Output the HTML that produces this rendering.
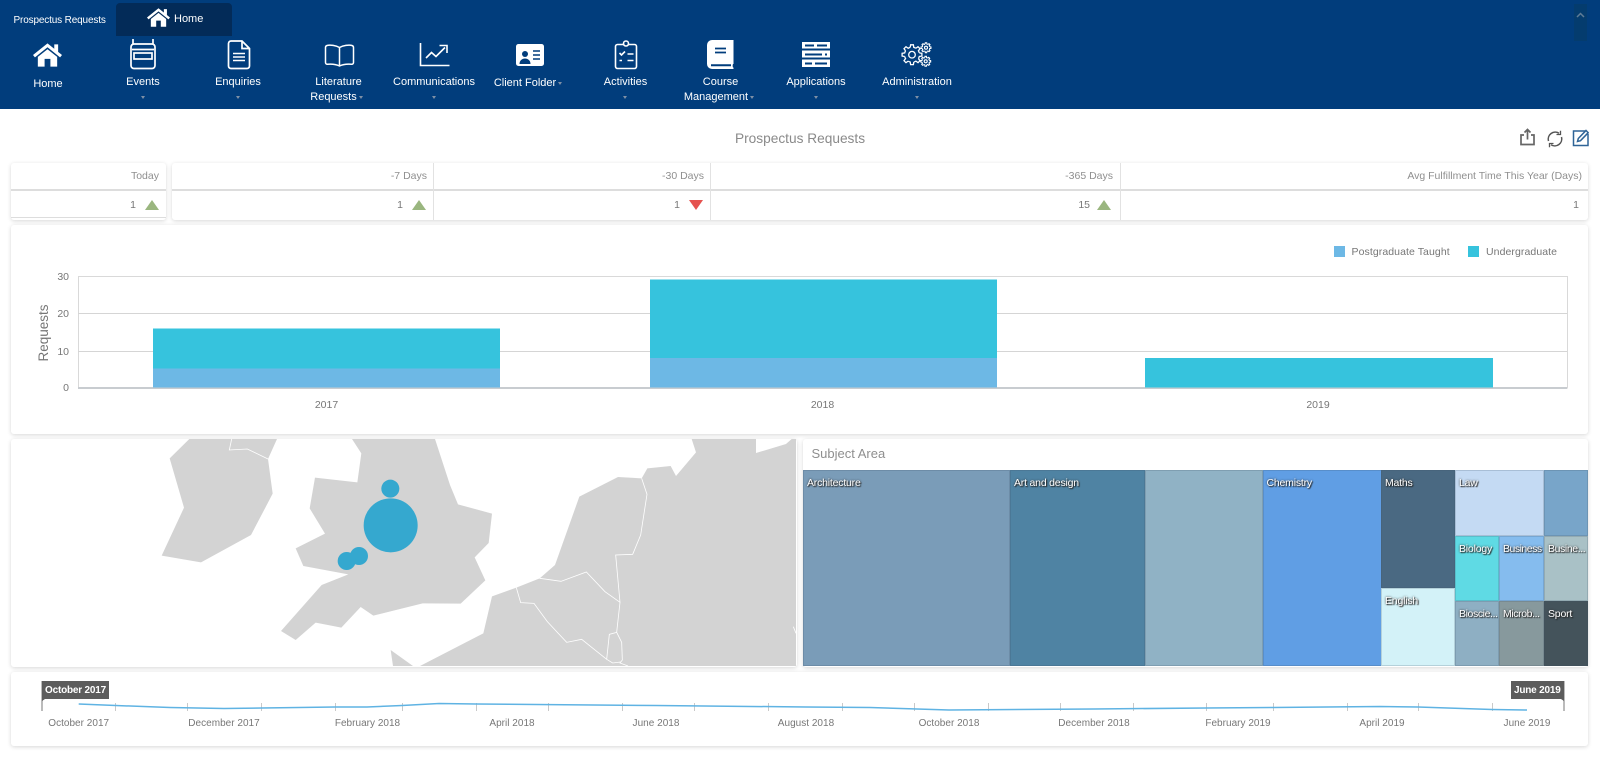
<!DOCTYPE html>
<html lang="en">
<head>
<meta charset="utf-8">
<title>Prospectus Requests</title>
<style>
html,body{margin:0;padding:0;width:1600px;height:757px;overflow:hidden;background:#fff;font-family:"Liberation Sans",sans-serif}
*{box-sizing:border-box}
.a{position:absolute}
.t{position:absolute;white-space:nowrap;line-height:14px}
.c{transform:translateX(-50%)}
.card{position:absolute;background:#fff;border-radius:3px;box-shadow:0 1px 4px rgba(0,0,0,.16)}
.nav{color:#fff;font-size:11px;text-align:center}
.car{position:absolute;width:0;height:0;border-left:2.5px solid transparent;border-right:2.5px solid transparent;border-top:3px solid #7f90a6}
.k{font-size:10.5px;color:#8f8f8f;right:0}
.v{font-size:10.5px;color:#777}
.tri{position:absolute;width:0;height:0;border-left:7px solid transparent;border-right:7px solid transparent}
.up{border-bottom:10px solid #9ab67f}
.dn{border-top:10px solid #e5524f}
.cell{position:absolute;border:1px solid rgba(60,80,100,.2);color:#fff;font-size:10.5px;letter-spacing:-.2px;line-height:14px;padding:5px 0 0 3px;text-shadow:1px 1px 1px #222,0 0 2px #333;overflow:hidden;white-space:nowrap}
.lab{font-size:10.5px;color:#777}
.tl{font-size:10px;letter-spacing:.02px;color:#777}
</style>
</head>
<body>
<div class="a" style="left:0;top:0;width:1600px;height:109px;background:#013d7c"></div>
<div class="a" style="left:116px;top:3px;width:116px;height:33px;background:#032b58;border-radius:4px 4px 0 0"></div>
<div class="a" style="left:1574px;top:4px;width:13px;height:37px;background:#043c6e"></div>
<svg class="a" style="left:1576px;top:12px" width="9" height="6"><path d="M1 5l3.5-3.5L8 5" fill="none" stroke="#5f7c96" stroke-width="1.5"/></svg>
<div class="t nav" style="left:13.500px;top:14px;font-size:10px;letter-spacing:-.15px">Prospectus Requests</div>
<div class="t nav" style="left:174px;top:12px;font-size:11px">Home</div>

<svg class="a" style="left:147px;top:8px" width="23" height="19" viewBox="0 0 30 24"><path fill="#fff" d="M15 0L30 12l-2 2.5L15 4 2 14.5 0 12zM22 1h4v8l-4-3zM15 6l10 8v10h-7v-8h-6v8H5V14z"/></svg>
<svg class="a" style="left:33px;top:43px" width="29" height="24" viewBox="0 0 30 24"><path fill="#fff" d="M15 0L30 12l-2 2.5L15 4 2 14.5 0 12zM22 1h4v8l-4-3zM15 6l10 8v10h-7v-8h-6v8H5V14z"/></svg>
<svg class="a" style="left:129px;top:39px" width="28" height="31" fill="none" stroke="#fff" stroke-width="1.7"><rect x="2" y="5" width="24" height="24.500" rx="3"/><path d="M3 10.500h22M4 0v5M24 0v5"/><rect x="5" y="14" width="18" height="6"/></svg>
<svg class="a" style="left:227px;top:40px" width="24" height="30" fill="none" stroke="#fff" stroke-width="1.7"><path d="M4 1h11l7.500 7.500V26a2.500 2.500 0 0 1-2.500 2.500H4A2.500 2.500 0 0 1 1.500 26V3.500A2.500 2.500 0 0 1 4 1zM15 1v7.500h7.500"/><path d="M6 13.500h12M6 17h12M6 20.500h12" stroke-width="1.500"/></svg>
<svg class="a" style="left:324px;top:42px" width="31" height="26" fill="none" stroke="#fff" stroke-width="1.5"><path d="M15.500 5.500C12 3.500 6 2.500 3 3.500 2 3.800 1.500 4.500 1.500 5.500v15c0 1 .8 1.800 2 1.700 4-.3 8.500 0 12 1.800 3.500-1.800 8-2.100 12-1.800 1.200.1 2-.7 2-1.700v-15c0-1-.5-1.700-1.500-2-3-1-9 0-12.500 2zM15.500 5.500V24"/></svg>
<svg class="a" style="left:419px;top:42px" width="31" height="26" fill="none" stroke="#fff" stroke-width="1.6"><path d="M1.500 1v22.500h29"/><path d="M7 16l5.500-5.500 4.500 4 9-9"/><path d="M20.500 3.500h7.500V11"/></svg>
<svg class="a" style="left:516px;top:43px" width="29" height="24"><rect x="0" y="1" width="28" height="22" rx="2.500" fill="#fff"/><circle cx="9" cy="11" r="3" fill="#013d7c"/><path d="M3.500 21c0-3.500 2.500-5.500 5.500-5.500s5.500 2 5.500 5.500z" fill="#013d7c"/><path d="M17 8h7M17 12h7M17 16h7" stroke="#013d7c" stroke-width="1.500"/></svg>
<svg class="a" style="left:614px;top:40px" width="24" height="30" fill="none" stroke="#fff" stroke-width="1.600"><rect x="1.500" y="4.500" width="21" height="24" rx="2"/><circle cx="12" cy="3.500" r="2.500" fill="#013d7c"/><path d="M5.500 13l2 2 3.500-3.500M13.500 14h6M5.500 20.500h2.500M13.500 20.500h6"/></svg>
<svg class="a" style="left:707px;top:40px" width="28" height="30"><path fill="#fff" d="M5 0h21.500v24H26c-.5 1-.5 2.500 0 3.500h.5V29H5a5 5 0 0 1-5-5V5a5 5 0 0 1 5-5z"/><path d="M8 8.500h11M8 12.500h11" stroke="#013d7c" stroke-width="1.800"/><path d="M4 25.200h20" stroke="#013d7c" stroke-width="2"/></svg>
<svg class="a" style="left:802px;top:42px" width="29" height="26"><rect x="0" y="0" width="28" height="25" fill="#fff"/><path d="M3 3.500h9M15 3.500h10M3 12.500h17M23 12.500h2M3 21.500h7M13 21.500h12" stroke="#013d7c" stroke-width="2"/><path d="M0 7.500h28M0 16.500h28" stroke="#013d7c" stroke-width="2"/></svg>
<svg class="a" style="left:901px;top:42px" width="33" height="27" fill="none" stroke="#fff">
<defs><path id="tth" d="M-1.810-7.280L-1.390-9.900H1.390L1.810-7.280A7.500 7.500 0 0 1 3.860-6.430"/></defs>
<g transform="translate(11 12.700)" stroke-width="1.300"><use href="#tth"/><use href="#tth" transform="rotate(45)"/><use href="#tth" transform="rotate(90)"/><use href="#tth" transform="rotate(135)"/><use href="#tth" transform="rotate(180)"/><use href="#tth" transform="rotate(225)"/><use href="#tth" transform="rotate(270)"/><use href="#tth" transform="rotate(315)"/><circle r="3.300"/></g>
<g transform="translate(25 5.700) scale(.5)" stroke-width="2.200"><use href="#tth"/><use href="#tth" transform="rotate(45)"/><use href="#tth" transform="rotate(90)"/><use href="#tth" transform="rotate(135)"/><use href="#tth" transform="rotate(180)"/><use href="#tth" transform="rotate(225)"/><use href="#tth" transform="rotate(270)"/><use href="#tth" transform="rotate(315)"/><circle r="3"/></g>
<g transform="translate(24.700 19.300) scale(.5)" stroke-width="2.200"><use href="#tth"/><use href="#tth" transform="rotate(45)"/><use href="#tth" transform="rotate(90)"/><use href="#tth" transform="rotate(135)"/><use href="#tth" transform="rotate(180)"/><use href="#tth" transform="rotate(225)"/><use href="#tth" transform="rotate(270)"/><use href="#tth" transform="rotate(315)"/><circle r="3"/></g>
</svg>

<div class="t nav c" style="left:48px;top:77px">Home</div>
<div class="t nav c" style="left:143px;top:75px">Events</div><div class="car" style="left:140.500px;top:96px"></div>
<div class="t nav c" style="left:238px;top:75px">Enquiries</div><div class="car" style="left:236px;top:96px"></div>
<div class="t nav c" style="left:338.500px;top:75px">Literature</div>
<div class="t nav c" style="left:333.500px;top:90px">Requests</div><div class="car" style="left:358.500px;top:96px"></div>
<div class="t nav c" style="left:434px;top:75px">Communications</div><div class="car" style="left:432px;top:96px"></div>
<div class="t nav c" style="left:525px;top:76px">Client Folder</div><div class="car" style="left:558px;top:82px"></div>
<div class="t nav c" style="left:625.500px;top:75px">Activities</div><div class="car" style="left:623px;top:96px"></div>
<div class="t nav c" style="left:720.500px;top:75px">Course</div>
<div class="t nav c" style="left:716px;top:90px">Management</div><div class="car" style="left:750px;top:96px"></div>
<div class="t nav c" style="left:816px;top:75px">Applications</div><div class="car" style="left:813.500px;top:96px"></div>
<div class="t nav c" style="left:917px;top:75px">Administration</div><div class="car" style="left:914.500px;top:96px"></div>

<div class="t c" style="left:800px;top:132px;font-size:13.700px;color:#8a8a8a">Prospectus Requests</div>
<svg class="a" style="left:1519px;top:128px" width="17" height="18" fill="none" stroke="#666" stroke-width="1.700"><path d="M5 7H2v9.500h13V7h-3"/><path d="M8.500 11.500V2M5.500 4.500l3-3 3 3"/></svg>
<svg class="a" style="left:1546px;top:130px" width="18" height="18" fill="none" stroke="#555" stroke-width="1.500"><path d="M2.500 11A7 7 0 0 1 13 3.200"/><path d="M15.500 7A7 7 0 0 1 5 14.800"/><path d="M10.500 4.500L14.500 4.500 14.500 .7M7.500 13.500H3.500v3.800" stroke-width="1.300"/></svg>
<svg class="a" style="left:1572px;top:129px" width="17" height="18" fill="none" stroke="#2f6497" stroke-width="1.500"><path d="M13 2H1.500v14.500H16V5"/><path d="M5.500 12.500l.8-3L14 1.500l2.200 2.200-7.700 8z"/></svg>

<!-- KPI cards -->
<div class="card" style="left:11px;top:163px;width:155px;height:57px"></div>
<div class="a" style="left:11px;top:189px;width:155px;height:2px;background:#ddd"></div>
<div class="a" style="left:11px;top:217px;width:155px;height:1px;background:#ddd"></div>
<div class="t k" style="left:auto;right:1441px;top:169px">Today</div>
<div class="t v" style="right:1464px;top:198px">1</div>
<div class="tri up" style="left:145px;top:200px"></div>

<div class="card" style="left:172px;top:163px;width:1416px;height:57px"></div>
<div class="a" style="left:172px;top:189px;width:1416px;height:2px;background:#ddd"></div>
<div class="a" style="left:433px;top:163px;width:1px;height:57px;background:#e2e2e2"></div>
<div class="a" style="left:710px;top:163px;width:1px;height:57px;background:#e2e2e2"></div>
<div class="a" style="left:1120px;top:163px;width:1px;height:57px;background:#e2e2e2"></div>
<div class="t k" style="right:1173px;top:169px">-7 Days</div>
<div class="t k" style="right:896px;top:169px">-30 Days</div>
<div class="t k" style="right:487px;top:169px">-365 Days</div>
<div class="t k" style="right:18px;top:169px">Avg Fulfillment Time This Year (Days)</div>
<div class="t v" style="right:1197px;top:198px">1</div>
<div class="tri up" style="left:412px;top:200px"></div>
<div class="t v" style="right:920px;top:198px">1</div>
<div class="tri dn" style="left:689px;top:200px"></div>
<div class="t v" style="right:510px;top:198px">15</div>
<div class="tri up" style="left:1097px;top:200px"></div>
<div class="t v" style="right:21px;top:198px">1</div>

<!-- bar chart -->
<div class="card" style="left:11px;top:225px;width:1577px;height:209px"></div>
<div class="a" style="left:1334px;top:246px;width:11px;height:11px;background:#6db8e5"></div>
<div class="t lab" style="left:1351.500px;top:245px;letter-spacing:.08px">Postgraduate Taught</div>
<div class="a" style="left:1468px;top:246px;width:11px;height:11px;background:#36c3dd"></div>
<div class="t lab" style="left:1486px;top:245px;letter-spacing:.08px">Undergraduate</div>
<svg class="a" style="left:0;top:0" width="1600" height="430">
<rect x="78.500" y="276.500" width="1489" height="111.500" fill="none" stroke="#d9d9d9"/>
<path d="M78 313.500h1489M78 351.500h1489" stroke="#d5d5d5"/>
<path d="M78 388h1489" stroke="#c8ccd0" stroke-width="2"/>
<rect x="153" y="328.500" width="347" height="40" fill="#36c3dd"/><rect x="153" y="368.500" width="347" height="19" fill="#6db8e5"/>
<rect x="650" y="279.500" width="347" height="78.500" fill="#36c3dd"/><rect x="650" y="358" width="347" height="29.500" fill="#6db8e5"/>
<rect x="1145" y="358" width="348" height="29.500" fill="#36c3dd"/>
</svg>
<div class="t lab" style="right:1531px;top:270px">30</div>
<div class="t lab" style="right:1531px;top:307px">20</div>
<div class="t lab" style="right:1531px;top:345px">10</div>
<div class="t lab" style="right:1531px;top:381px">0</div>
<div class="t" style="left:44px;top:333px;font-size:13.500px;color:#777;transform:translate(-50%,-50%) rotate(-90deg)">Requests</div>
<div class="t lab c" style="left:326.500px;top:398px">2017</div>
<div class="t lab c" style="left:822.500px;top:398px">2018</div>
<div class="t lab c" style="left:1318px;top:398px">2019</div>

<!-- map -->
<div class="card" style="left:11px;top:439px;width:786px;height:228px"></div>
<svg class="a" style="left:0;top:425px" width="800" height="245" viewBox="0 0 2400 735">
<g fill="#d3d3d3">
<polygon points="568,42 509,100 552,248 485,392 603,412 753,330 818,206 804,102 831,42"/>
<polygon points="945,158 1072,172 1084,85 1056,42 1305,42 1350,180 1374,238 1476,266 1466,354 1424,397 1456,466 1382,536 1268,535 1200,552 1120,572 1082,546 1024,608 947,593 887,645 843,618 965,480 1045,448 910,423 887,370 975,326 929,250"/>
<polygon points="1476,514 1549,488 1619,460 1665,420 1738,215 1854,156 1925,160 1942,130 2012,123 2028,153 2088,82 2075,42 2268,42 2268,84 2358,57 2375,42 2388,42 2388,723 1260,723 1450,625"/>
<polygon points="1172,675 1239,723 1179,723"/>
</g>
<g fill="none" stroke="#fff" stroke-width="2.400">
<polyline points="695,42 688,75 742,72 804,102"/>
<polyline points="1925,160 1941,208 1922,330 1898,388 1847,390 1860,532 1850,622 1865,652 1867,705 1860,714 1884,723"/>
<polyline points="1619,460 1683,469 1759,441 1815,500 1860,532"/>
<polyline points="1549,488 1562,533 1602,535 1642,590 1700,652 1745,643 1820,703 1838,714 1862,711"/>
<polyline points="1850,622 1828,628 1820,703"/>
<polyline points="2380,605 2388,625"/>
</g>
<g fill="#35a8cf">
<circle cx="1172" cy="301" r="81"/><circle cx="1171" cy="191" r="27"/><circle cx="1077" cy="393" r="27"/><circle cx="1040" cy="408" r="27"/>
</g>
</svg>

<!-- treemap -->
<div class="card" style="left:803px;top:439px;width:785px;height:228px"></div>
<div class="t" style="left:811.500px;top:447px;font-size:13px;color:#8f8f8f">Subject Area</div>
<div class="cell" style="left:803px;top:470px;width:207px;height:196px;background:#7a9cb8">Architecture</div>
<div class="cell" style="left:1010px;top:470px;width:134.500px;height:196px;background:#4f83a3">Art and design</div>
<div class="cell" style="left:1144.500px;top:470px;width:118px;height:196px;background:#90b2c5"></div>
<div class="cell" style="left:1262.500px;top:470px;width:119px;height:196px;background:#609ee4">Chemistry</div>
<div class="cell" style="left:1381px;top:470px;width:74px;height:118px;background:#4a6982">Maths</div>
<div class="cell" style="left:1381px;top:588px;width:74px;height:78px;background:#d3f2f8">English</div>
<div class="cell" style="left:1455px;top:470px;width:89px;height:66px;background:#c4daf3">Law</div>
<div class="cell" style="left:1544px;top:470px;width:44px;height:66px;background:#78a5c9"></div>
<div class="cell" style="left:1455px;top:536px;width:44px;height:65px;background:#5fdae4">Biology</div>
<div class="cell" style="left:1499px;top:536px;width:45px;height:65px;background:#85bcee;letter-spacing:-.5px">Business</div>
<div class="cell" style="left:1544px;top:536px;width:44px;height:65px;background:#a9c1c6;letter-spacing:-.4px">Busine...</div>
<div class="cell" style="left:1455px;top:601px;width:44px;height:65px;background:#8eafc3;letter-spacing:-.4px">Bioscie...</div>
<div class="cell" style="left:1499px;top:601px;width:45px;height:65px;background:#87999d;letter-spacing:-.4px">Microb...</div>
<div class="cell" style="left:1544px;top:601px;width:44px;height:65px;background:#44535b">Sport</div>

<!-- timeline -->
<div class="card" style="left:11px;top:672px;width:1577px;height:74px"></div>
<svg class="a" style="left:0;top:670px" width="1600" height="50">
<g stroke="#c9c9c9"><path d="M115.500 33v8M187.500 33v8M261.500 33v8M335.500 33v8M402.500 33v8M476.500 33v8M548.500 33v8M622.500 33v8M694.500 33v8M768.500 33v8M842.500 33v8M914.500 33v8M988.500 33v8M1060.500 33v8M1133.500 33v8M1206.500 33v8M1273.500 33v8M1347.500 33v8M1418.500 33v8M1492.500 33v8"/></g>
<polyline fill="none" stroke="#5fb3e3" stroke-width="1.500" points="78.700,34 115.700,35.500 170,37.500 224,38.500 262,38 335,37 367,37 402,35.500 439,33.500 476,34 656,35.500 806,37 870,37.500 949,40 1094,39 1206,38 1273,37.500 1380,36.500 1418,37 1492,39.500 1527,40"/>
<path d="M42 11v30" stroke="#bbb" stroke-width="2"/><path d="M1564 11v30" stroke="#bbb" stroke-width="2"/>
<path d="M42 29h3l-3 2zM1564 29h-3l3 2z" fill="#5c5c5c"/>
</svg>
<div class="a" style="left:42px;top:681px;width:67px;height:18px;background:#5c5c5c"></div>
<div class="t" style="left:45px;top:684px;font-size:10px;letter-spacing:-.2px;color:#fff;font-weight:bold">October 2017</div>
<div class="a" style="left:1511px;top:681px;width:53px;height:18px;background:#5c5c5c"></div>
<div class="t" style="left:1514px;top:684px;font-size:10px;letter-spacing:-.2px;color:#fff;font-weight:bold">June 2019</div>
<div class="t tl c" style="left:78.700px;top:717px">October 2017</div>
<div class="t tl c" style="left:224px;top:717px">December 2017</div>
<div class="t tl c" style="left:367.500px;top:717px">February 2018</div>
<div class="t tl c" style="left:512px;top:717px">April 2018</div>
<div class="t tl c" style="left:656px;top:717px">June 2018</div>
<div class="t tl c" style="left:806px;top:717px">August 2018</div>
<div class="t tl c" style="left:949px;top:717px">October 2018</div>
<div class="t tl c" style="left:1094px;top:717px">December 2018</div>
<div class="t tl c" style="left:1238px;top:717px">February 2019</div>
<div class="t tl c" style="left:1382px;top:717px">April 2019</div>
<div class="t tl c" style="left:1527px;top:717px">June 2019</div>
</body>
</html>
